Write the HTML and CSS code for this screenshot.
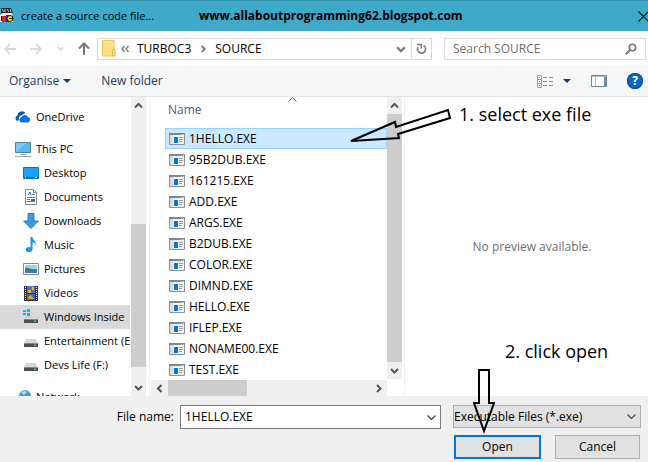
FILE: index.html
```html
<!DOCTYPE html>
<html lang="en">
<head>
    <meta charset="UTF-8">
    <meta name="viewport" content="width=device-width, initial-scale=1.0">
    <title>create a source code file...</title>
    <link rel="stylesheet" href="styles.css">
</head>
<body>
    <!-- Shared icons -->
    <svg class="sprite" width="0" height="0">
        <symbol id="chevron-up" viewBox="0 0 9 9"><path d="M1 6.5 4.5 3 8 6.5" fill="none" stroke="currentColor" stroke-width="2"/></symbol>
        <symbol id="chevron-down" viewBox="0 0 9 9"><path d="M1 3 4.5 6.5 8 3" fill="none" stroke="currentColor" stroke-width="2"/></symbol>
        <symbol id="chevron-left" viewBox="0 0 9 9"><path d="M6.5 1 3 4.5 6.5 8" fill="none" stroke="currentColor" stroke-width="2"/></symbol>
        <symbol id="chevron-right" viewBox="0 0 9 9"><path d="M3 1 6.5 4.5 3 8" fill="none" stroke="currentColor" stroke-width="2"/></symbol>
        <symbol id="thin-down" viewBox="0 0 9 9"><path d="M.5 2.5 4.5 6.5 8.500 2.500" fill="none" stroke="currentColor" stroke-width="1.200"/></symbol>
        <symbol id="exe" viewBox="0 0 16 12">
            <path d="M.5.5h15v11H.5z" fill="#f4f4f4" stroke="#8b9197"/>
            <path d="M0 0h16v2H0z" fill="#7f868d"/>
            <path d="M12 1h1v1h-1zM14 1h1v1h-1z" fill="#d5d8da"/>
            <path d="M1 2h3v9H1z" fill="#dcdcdc"/>
            <path d="M5 4h4v6H5z" fill="#0078d7"/>
            <path d="M10 4.500h4M10 6.500h4M10 8.500h3" stroke="#9a9a9a"/>
        </symbol>
        <symbol id="drive" viewBox="0 0 16 16">
            <path d="M3.500 6h9L15 10H1z" fill="#d4d6d8"/>
            <path d="M1 10h14v4H1z" fill="#4c5055"/>
            <path d="M1 10h14v1H1z" fill="#85898d"/>
            <path d="M11 11.500h2v1.500h-2z" fill="#37e04b"/>
        </symbol>
    </svg>

    <div class="dialog">
        <header class="title-bar">
            <svg class="app-icon" width="14" height="16" viewBox="0 0 14 16">
                <path d="M1 0h10l2 5H1z" fill="#222"/>
                <path d="M2 1l2 3M5 1v3M7 1l2 3M10 1l1 3" stroke="#c9c9c9"/>
                <path d="M0 7 4 5h8l1 9H0z" fill="#eee"/>
                <path d="M1 8h3v5H1z" fill="#111"/>
                <path d="M2 8h4v6H2z" fill="#e11b22"/>
                <path d="M6 7h3v7H6z" fill="#1d2bb8"/>
                <circle cx="10" cy="10.500" r="3" fill="#ffe11a" stroke="#111"/>
                <path d="M9 10.500h4" stroke="#111"/>
            </svg>
            <h1>create a source code file...</h1>
            <span class="site">www.allaboutprogramming62.blogspot.com</span>
            <button class="close" type="button" aria-label="Close">
                <svg width="11" height="11" viewBox="0 0 11 11"><path d="M.5.5l10 10M10.500.5l-10 10" stroke="#111" stroke-width="1.200"/></svg>
            </button>
        </header>

        <!-- Address row -->
        <div class="address-row">
            <div class="history">
                <button type="button" aria-label="Back"><svg width="12" height="12" viewBox="0 0 12 12"><path d="M12 6H1M6 1 1 6l5 5" fill="none" stroke="#d9d9d9" stroke-width="1.800"/></svg></button>
                <button type="button" aria-label="Forward"><svg width="12" height="12" viewBox="0 0 12 12"><path d="M0 6h11M6 1l5 5-5 5" fill="none" stroke="#d9d9d9" stroke-width="1.800"/></svg></button>
                <button class="recent" type="button" aria-label="Recent locations"><svg width="7" height="7"><use href="#chevron-down"/></svg></button>
                <button type="button" aria-label="Up"><svg width="12" height="13" viewBox="0 0 12 13"><path d="M6 13V1.500M1 6.500l5-5 5 5" fill="none" stroke="#777" stroke-width="2"/></svg></button>
            </div>
            <nav class="path" aria-label="Path">
                <svg width="14" height="17" viewBox="0 0 14 17">
                    <path d="M.5.500h11.500v15.500H.5z" fill="#ffe08a" stroke="#f0c650"/>
                    <path d="M10.500 9.500h2.500v6.500h-2.500z" fill="#ffe9a8" stroke="#e8b93c"/>
                </svg>
                <span class="more">
                    <svg width="8" height="8" viewBox="0 0 8 8"><path d="M3.500 1 1 4l2.500 3M7.500 1 5 4l2.500 3" fill="none" stroke="#777" stroke-width="1.300"/></svg>
                </span>
                <a href="#">TURBOC3</a>
                <svg class="sep" width="8" height="8"><use href="#chevron-right"/></svg>
                <a href="#">SOURCE</a>
                <button class="path-drop" type="button" aria-label="Previous locations"><svg width="10" height="10"><use href="#chevron-down"/></svg></button>
                <button class="refresh" type="button" aria-label="Refresh">
                    <svg width="11" height="12" viewBox="0 0 11 12"><path d="M7.500 2.600A4 4 0 1 1 2 4.200" fill="none" stroke="#777" stroke-width="1.700"/><path d="M1 1.500h4.200v4" fill="none" stroke="#777" stroke-width="1.500"/></svg>
                </button>
            </nav>
            <div class="search">
                <input type="text" placeholder="Search SOURCE" aria-label="Search SOURCE">
                <svg width="12" height="12" viewBox="0 0 12 12"><circle cx="7.500" cy="4.500" r="3.200" fill="none" stroke="#777" stroke-width="1.600"/><path d="M5 7 .8 11.200" stroke="#777" stroke-width="2"/></svg>
            </div>
        </div>

        <!-- Toolbar -->
        <div class="toolbar">
            <button class="organise" type="button">Organise <svg width="8" height="4" viewBox="0 0 8 4"><path d="M0 0h8L4 4z" fill="#1c3a63"/></svg></button>
            <button type="button">New folder</button>
            <div class="view-tools">
                <button class="views" type="button" aria-label="Change your view">
                    <svg width="17" height="13" viewBox="0 0 17 13">
                        <path d="M.5.500h4v12h-4zM.5 4.500h4M.5 8.500h4" fill="#fff" stroke="#999"/>
                        <path d="M2 2h1v1H2z" fill="#3a9e4a"/><path d="M2 6h1v1H2z" fill="#2a78d0"/><path d="M2 10h1v1H2z" fill="#c02"/>
                        <path d="M6 2.500h4M12 2.500h4M6 6.500h4M12 6.500h4M6 10.500h4M12 10.500h4" stroke="#888"/>
                    </svg>
                    <svg width="8" height="4" viewBox="0 0 8 4"><path d="M0 0h8L4 4z" fill="#1c3a63"/></svg>
                </button>
                <button type="button" aria-label="Preview pane">
                    <svg width="16" height="12" viewBox="0 0 16 12"><path d="M.5.500h15v11H.5z" fill="#fff" stroke="#808080"/><path d="M1 1.500h14M4.500 1v10" stroke="#bbb"/><path d="M13 2h2v9h-2z" fill="#3c9be8"/></svg>
                </button>
                <button class="help" type="button" aria-label="Help">?</button>
            </div>
        </div>

        <main class="panes">
            <nav class="tree" aria-label="Folders">
                <ul>
                    <li class="root">
                        <svg width="16" height="16" viewBox="0 0 16 16"><path d="M2 12a3 3 0 0 1 .5-5.500A4.500 4.500 0 0 1 10.500 4L7 6a4 4 0 0 0-3 5z" fill="#0a5fb5"/><path d="M6.500 13.500a2.700 2.700 0 0 1-.3-5.200A3.700 3.700 0 0 1 13 8a2.800 2.800 0 0 1 0 5.500z" fill="#0f74d1"/></svg>
                        <a href="#">OneDrive</a>
                    </li>
                    <li class="root pc">
                        <svg width="16" height="16" viewBox="0 0 16 16"><path d="M.5 1.500h15v10H.5z" fill="#53b9f2" stroke="#557e9c"/><path d="M1 11 12 2H1z" fill="#7ccbf7"/><path d="M5 13.500h6M0 15.500h16" stroke="#9aa9b5"/></svg>
                        <a href="#">This PC</a>
                    </li>
                    <li>
                        <svg width="16" height="16" viewBox="0 0 16 16"><path d="M.5 2.500h15v11H.5z" fill="#1ba1f5" stroke="#0c70bb"/><path d="M1 12.500h14" stroke="#064a80"/><path d="M2 12.500h1M12 12.500h2" stroke="#fff"/></svg>
                        <a href="#">Desktop</a>
                    </li>
                    <li>
                        <svg width="16" height="16" viewBox="0 0 16 16"><path d="M2.500.500h8l3 3v12h-11z" fill="#fff" stroke="#888"/><path d="M10.500.500v3h3" fill="none" stroke="#888"/><path d="M5 6.500 7 3l1 3.500" fill="none" stroke="#2378bd"/><path d="M9 5.500h3M4 8.500h8M4 10.500h3M4 12.500h8" stroke="#2f86cc"/><path d="M8 10h4v2H8z" fill="#37718e"/></svg>
                        <a href="#">Documents</a>
                    </li>
                    <li>
                        <svg width="16" height="16" viewBox="0 0 16 16"><path d="M5 .5h6V8h4.500L8 15.500.5 8H5z" fill="#3c97e6" stroke="#2c7cc4"/></svg>
                        <a href="#">Downloads</a>
                    </li>
                    <li>
                        <svg width="16" height="16" viewBox="0 0 16 16"><ellipse cx="6" cy="12.500" rx="3.200" ry="2.600" fill="#1596ec"/><path d="M7.500 0h2c0 3 4 4 3.500 8-1-2-2.500-2.500-3.500-2.500V13h-2z" fill="#1596ec"/></svg>
                        <a href="#">Music</a>
                    </li>
                    <li>
                        <svg width="16" height="16" viewBox="0 0 16 16"><path d="M.5 2.500h15v11H.5z" fill="#fff" stroke="#888"/><path d="M2 4h12v8H2z" fill="#9fd1f0"/><path d="M2 7c3-1 6 2 12 1v4H2z" fill="#2f7f86"/><path d="M2 10h12v2H2z" fill="#3f79b5"/></svg>
                        <a href="#">Pictures</a>
                    </li>
                    <li>
                        <svg width="16" height="16" viewBox="0 0 16 16"><path d="M1 1h14v15H1z" fill="#333"/><path d="M4 1h8v7H4z" fill="#4b74c4"/><path d="M4 9h8v6H4z" fill="#3c66c0"/><path d="M5 5h3v3H5zM9 2h2v3H9z" fill="#e5b52b"/><path d="M8 5h3v2H8z" fill="#c34830"/><path d="M5 12l3-2 3 4H5z" fill="#d9a441"/><path d="M2.500 2v13M13.500 2v13" stroke="#fff" stroke-dasharray="1 1"/></svg>
                        <a href="#">Videos</a>
                    </li>
                    <li class="selected">
                        <svg width="16" height="16" viewBox="0 0 16 16"><use href="#drive"/><path d="M0 1h3v2H0zM4 0h3v3H4zM0 4h3v2H0zM4 4h3v3H4z" fill="#12b3f0"/></svg>
                        <a href="#">Windows Inside</a>
                    </li>
                    <li>
                        <svg width="16" height="16"><use href="#drive"/></svg>
                        <a href="#">Entertainment (E:)</a>
                    </li>
                    <li>
                        <svg width="16" height="16"><use href="#drive"/></svg>
                        <a href="#">Devs Life (F:)</a>
                    </li>
                    <li class="root network">
                        <svg width="16" height="16" viewBox="0 0 16 16"><circle cx="10" cy="7" r="6" fill="#4a9cc8"/><path d="M6 4c2-3 5-2 6-1l-3 3z" fill="#a6d8ee"/><path d="M0 7h7v5H0z" fill="#35769e"/></svg>
                        <a href="#">Network</a>
                    </li>
                </ul>
                <div class="scrollbar">
                    <button type="button" aria-label="Scroll up"><svg width="9" height="9"><use href="#chevron-up"/></svg></button>
                    <div class="track tree-track"><div class="thumb"></div></div>
                    <button type="button" aria-label="Scroll down"><svg width="9" height="9"><use href="#chevron-down"/></svg></button>
                </div>
            </nav>

            <section class="files">
                <div class="file-area">
                    <table>
                        <thead>
                            <tr><th>Name<svg class="sort" width="9" height="5" viewBox="0 0 9 5"><path d="M.5 4.500l4-4 4 4" fill="none" stroke="#666"/></svg></th></tr>
                        </thead>
                        <tbody>
                            <tr class="selected"><td><svg width="16" height="12"><use href="#exe"/></svg>1HELLO.EXE</td></tr>
                            <tr><td><svg width="16" height="12"><use href="#exe"/></svg>95B2DUB.EXE</td></tr>
                            <tr><td><svg width="16" height="12"><use href="#exe"/></svg>161215.EXE</td></tr>
                            <tr><td><svg width="16" height="12"><use href="#exe"/></svg>ADD.EXE</td></tr>
                            <tr><td><svg width="16" height="12"><use href="#exe"/></svg>ARGS.EXE</td></tr>
                            <tr><td><svg width="16" height="12"><use href="#exe"/></svg>B2DUB.EXE</td></tr>
                            <tr><td><svg width="16" height="12"><use href="#exe"/></svg>COLOR.EXE</td></tr>
                            <tr><td><svg width="16" height="12"><use href="#exe"/></svg>DIMND.EXE</td></tr>
                            <tr><td><svg width="16" height="12"><use href="#exe"/></svg>HELLO.EXE</td></tr>
                            <tr><td><svg width="16" height="12"><use href="#exe"/></svg>IFLEP.EXE</td></tr>
                            <tr><td><svg width="16" height="12"><use href="#exe"/></svg>NONAME00.EXE</td></tr>
                            <tr><td><svg width="16" height="12"><use href="#exe"/></svg>TEST.EXE</td></tr>
                        </tbody>
                    </table>
                    <div class="scrollbar horizontal">
                        <button type="button" aria-label="Scroll left"><svg width="9" height="9"><use href="#chevron-left"/></svg></button>
                        <div class="track file-track-x"><div class="thumb"></div></div>
                        <button type="button" aria-label="Scroll right"><svg width="9" height="9"><use href="#chevron-right"/></svg></button>
                    </div>
                </div>
                <div class="scrollbar">
                    <button type="button" aria-label="Scroll up"><svg width="9" height="9"><use href="#chevron-up"/></svg></button>
                    <div class="track"><div class="thumb"></div></div>
                    <button type="button" aria-label="Scroll down"><svg width="9" height="9"><use href="#chevron-down"/></svg></button>
                </div>
            </section>

            <aside class="preview">
                <p>No preview available.</p>
            </aside>
        </main>

        <form class="bottom">
            <label for="fileName">File name:</label>
            <div class="combo">
                <input type="text" id="fileName" value="1HELLO.EXE">
                <button type="button" aria-label="Show file names"><svg width="9" height="9"><use href="#thin-down"/></svg></button>
            </div>
            <div class="filter">
                <select aria-label="File type">
                    <option>Executable Files (*.exe)</option>
                </select>
                <svg width="9" height="9"><use href="#thin-down"/></svg>
            </div>
            <div class="actions">
                <button class="open" type="button">Open</button>
                <button type="button">Cancel</button>
            </div>
        </form>

        <!-- Notes drawn over the dialog -->
        <svg class="arrow arrow-select" width="104" height="40" viewBox="0 0 104 40">
            <path d="M2 36 46 17l1 5 52-17 2 8-52 16 1 4z" fill="none" stroke="#000" stroke-width="2"/>
        </svg>
        <p class="note note-select">1. select exe file</p>
        <p class="note note-open">2. click open</p>
        <svg class="arrow arrow-open" width="22" height="66" viewBox="0 0 22 66">
            <path d="M6 2h10v33h5L11 63 1 35h5z" fill="none" stroke="#000" stroke-width="2"/>
        </svg>
    </div>
</body>
</html>
```
FILE: styles.css
```css
* {
    box-sizing: border-box;
}

body {
    margin: 0;
    font-family: "Open Sans", "Noto Sans", sans-serif;
    font-size: 12px;
    line-height: 16px;
    color: #000;
}

svg {
    display: block;
    flex-shrink: 0;
}

.sprite {
    position: absolute;
}

a {
    color: inherit;
    text-decoration: none;
}

button,
input,
select {
    font: inherit;
    color: inherit;
    margin: 0;
    padding: 0;
    border: none;
    background: none;
    outline: none;
}

.dialog {
    position: relative;
    display: flex;
    flex-direction: column;
    height: 100vh;
    overflow: hidden;
    background-color: #fff;
}

/* Title bar */
.title-bar {
    display: flex;
    align-items: center;
    height: 31px;
    background-color: #3ea9c9;
    border-top: 1px solid #3795b2;
}

.title-bar h1 {
    width: 178px;
    margin: 0 0 0 7px;
    font-size: 11px;
    font-weight: normal;
    white-space: nowrap;
}

.site {
    font-size: 12px;
    font-weight: bold;
}

.close {
    margin-left: auto;
    margin-right: -1px;
}

/* Address row */
.address-row {
    display: flex;
    align-items: center;
    height: 35px;
    padding-right: 2px;
}

.history {
    display: flex;
    align-items: center;
    justify-content: space-between;
    width: 97px;
    padding: 0 7px 0 4px;
}

.history .recent {
    color: #d0d0d0;
}

.path {
    display: flex;
    align-items: center;
    flex: 3;
    height: 22px;
    padding-left: 4px;
    border: 1px solid #d9d9d9;
}

.more {
    margin: 0 8px 0 5px;
}

.sep {
    margin: 0 8px;
    color: #777;
}

.path-drop {
    margin-left: auto;
    padding: 0 5px;
    color: #777;
}

.refresh {
    align-self: stretch;
    padding: 0 4px;
    border-left: 1px solid #d9d9d9;
}

.search {
    display: flex;
    align-items: center;
    width: 202px;
    height: 22px;
    margin-left: 12px;
    padding: 0 8px;
    border: 1px solid #d9d9d9;
}

.search input {
    flex: 1;
    min-width: 0;
}

.search input::placeholder {
    color: #6d6d6d;
    opacity: 1;
}

/* Toolbar */
.toolbar {
    display: flex;
    align-items: center;
    gap: 30px;
    height: 31px;
    padding: 0 5px 0 9px;
    background-color: #f5f6f7;
    border-bottom: 1px solid #e5e5e5;
    color: #1e395b;
}

.organise,
.views {
    display: flex;
    align-items: center;
    gap: 4px;
}

.views {
    gap: 9px;
}

.view-tools {
    display: flex;
    align-items: center;
    gap: 20px;
    margin-left: auto;
}

.help {
    width: 16px;
    height: 16px;
    border-radius: 50%;
    background-color: #0c66c4;
    box-shadow: 0 0 0 1px #0a4b94 inset;
    color: #fff;
    font-weight: bold;
}

/* Panes */
.panes {
    display: flex;
    flex: 1;
    min-height: 0;
}

.tree {
    display: flex;
    width: 150px;
    padding-right: 3px;
    border-right: 1px solid #f0f0f0;
    font-size: 11px;
    overflow: hidden;
}

.tree ul {
    flex: 1;
    min-width: 0;
    margin: 0;
    padding: 8px 0 0;
    list-style: none;
    overflow: hidden;
}

.tree li {
    display: flex;
    align-items: center;
    gap: 5px;
    height: 24px;
    padding-left: 23px;
    margin-right: 1px;
    white-space: nowrap;
    overflow: hidden;
}

.tree .root {
    padding-left: 15px;
}

.tree .pc,
.tree .network {
    margin-top: 8px;
}

.tree .selected {
    background-color: #d9d9d9;
}

/* Scrollbars */
.scrollbar {
    display: flex;
    flex-direction: column;
    width: 15px;
    flex-shrink: 0;
    background-color: #f0f0f0;
    color: #555;
}

.scrollbar button {
    display: flex;
    align-items: center;
    justify-content: center;
    height: 17px;
}

.scrollbar.horizontal {
    flex-direction: row;
    width: auto;
    height: 16px;
}

.scrollbar.horizontal button {
    width: 17px;
    height: auto;
}

.track {
    display: flex;
    flex-direction: column;
    flex: 1;
}

.horizontal .track {
    flex-direction: row;
}

.thumb {
    flex: 1;
    background-color: #cdcdcd;
}

.tree-track .thumb {
    flex: none;
    height: 54%;
    margin-top: auto;
    margin-bottom: 12px;
}

.file-track-x .thumb {
    flex: none;
    width: 39%;
}

/* File list */
.files {
    display: flex;
    width: 255px;
    padding-left: 1px;
    padding-right: 2px;
    border-right: 1px solid #f0f0f0;
}

.file-area {
    display: flex;
    flex-direction: column;
    justify-content: space-between;
    flex: 1;
    min-width: 0;
}

.files > .scrollbar {
    margin-bottom: 17px;
}

.files table {
    width: 100%;
    border-collapse: collapse;
}

.files th {
    display: flex;
    align-items: center;
    height: 31px;
    padding: 0 0 5px 17px;
    font-weight: normal;
    color: #4c607a;
}

.sort {
    align-self: flex-start;
    margin-left: 86px;
}

.files td {
    display: flex;
    align-items: center;
    gap: 4px;
    height: 21px;
    margin-left: 14px;
    padding: 0 0 0 4px;
}

.files .selected td {
    background-color: #cce8ff;
    box-shadow: 0 0 0 1px #99d1ff inset;
}

.preview {
    display: flex;
    align-items: center;
    justify-content: center;
    flex: 1;
    padding-left: 11px;
    color: #6d6d6d;
}

.preview p {
    margin: 0;
}

/* Bottom area */
.bottom {
    display: grid;
    grid-template-columns: 174px 1fr 188px;
    gap: 6px 0;
    padding: 9px 7px 3px 0;
    background-color: #f0f0f0;
}

.bottom label {
    align-self: center;
    text-align: right;
}

.combo {
    display: flex;
    align-items: center;
    height: 24px;
    margin: 0 12px 0 6px;
    padding: 0 4px;
    border: 1px solid #7a7a7a;
    background-color: #fff;
    color: #333;
}

.combo input {
    flex: 1;
    min-width: 0;
    color: #000;
}

.filter {
    display: grid;
    align-items: center;
    height: 23px;
    border: 1px solid #adadad;
    background-color: #e1e1e1;
}

.filter select,
.filter svg {
    grid-area: 1 / 1;
}

.filter select {
    appearance: none;
}

.filter svg {
    justify-self: end;
    margin-right: 4px;
    color: #444;
    pointer-events: none;
}

.actions {
    grid-column: 3;
    display: flex;
    gap: 14px;
    padding: 0 1px;
}

.actions button {
    flex: 1;
    height: 24px;
    border: 1px solid #adadad;
    background-color: #e1e1e1;
}

.actions .open {
    border: 2px solid #0078d7;
}

/* Notes */
.note {
    position: absolute;
    margin: 0;
    font-size: 18px;
    line-height: 24px;
    white-space: nowrap;
}

.note-select {
    left: 459px;
    top: 102px;
}

.note-open {
    left: 505px;
    top: 339px;
}

.arrow {
    position: absolute;
    pointer-events: none;
}

.arrow-select {
    left: 349px;
    top: 105px;
}

.arrow-open {
    left: 473px;
    top: 368px;
}
```
